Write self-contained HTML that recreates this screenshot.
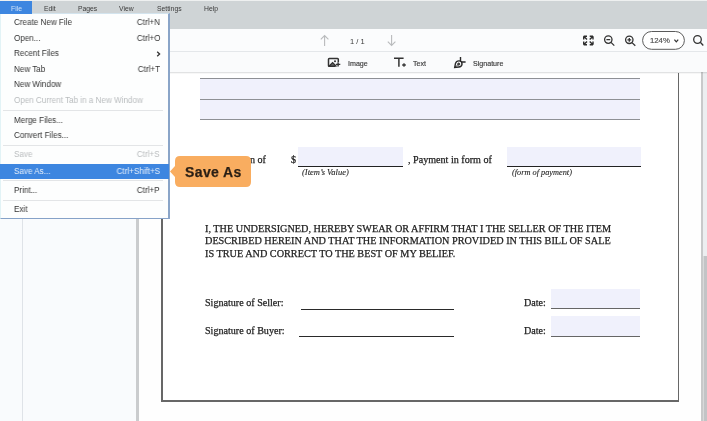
<!DOCTYPE html>
<html><head><meta charset="utf-8">
<style>
*{margin:0;padding:0;box-sizing:border-box}
html,body{width:707px;height:421px;overflow:hidden;background:#fff;position:relative;font-family:"Liberation Sans",sans-serif}
.a{will-change:transform}
.a{position:absolute;white-space:nowrap}
.mb{font-size:6.8px;color:#3a3a3a;line-height:10px}
.mi{font-size:8.4px;color:#333;line-height:10px;left:14px;transform:scaleX(0.965);transform-origin:0 0}
.sc{font-size:8.4px;color:#333;line-height:10px;right:547px;text-align:right;transform:scaleX(0.965);transform-origin:100% 0}
.dis{color:#b9bcbe}
.sep{position:absolute;left:3px;width:160px;height:1px;background:#e3e5e7}
.serif{font-family:"Liberation Serif",serif;color:#1e1e1e;-webkit-text-stroke:0.25px #1e1e1e}
.tb{font-size:7.1px;color:#3a3a3a;line-height:10px;-webkit-text-stroke:0.15px #3a3a3a}
.fld{position:absolute;background:#f0f1fc;border-bottom:1.5px solid #333}
</style></head><body><div id="w" style="position:absolute;left:0;top:0;width:707px;height:421px;overflow:hidden;filter:blur(0.35px)">
<!-- header -->
<div class="a" style="left:0;top:0;width:707px;height:1px;background:#eef0f0"></div>
<div class="a" style="left:0;top:1px;width:707px;height:28px;background:#cfd4d6"></div>
<div class="a" style="left:0;top:1px;width:32px;height:13px;background:#3d86e0;z-index:3"></div>
<div class="a mb" style="left:10.5px;top:3.8px;color:#cfe2f8;z-index:3">File</div>
<div class="a mb" style="left:43.5px;top:3.8px">Edit</div>
<div class="a mb" style="left:77.5px;top:3.8px">Pages</div>
<div class="a mb" style="left:118.5px;top:3.8px">View</div>
<div class="a mb" style="left:157px;top:3.8px">Settings</div>
<div class="a mb" style="left:204px;top:3.8px">Help</div>

<!-- toolbar row 1 -->
<div class="a" style="left:0;top:29px;width:707px;height:23px;background:#fbfcfd;border-bottom:1px solid #e4e7ea"></div>
<!-- toolbar row 2 -->
<div class="a" style="left:0;top:52px;width:707px;height:20.5px;background:#fafbfc;box-shadow:0 1px 1.5px rgba(0,0,0,0.12) "></div>

<!-- toolbar icons (absolute coords) -->
<svg class="a" style="left:0;top:0 " width="707" height="73" viewBox="0 0 707 73">
 <g fill="none" stroke="#b9bbbd" stroke-width="1.1">
  <path d="M324.6 35.5V46M320.8 39.3L324.6 35.5L328.4 39.3"/>
  <path d="M391.6 35V45.5M387.8 41.7L391.6 45.5L395.4 41.7"/>
 </g>
 <g stroke="#2e2e2e" fill="none" stroke-width="1.4">
  <path d="M583.7 36.3H587M583.7 36.3V39.6M583.7 36.3L587 39.6"/>
  <path d="M593 36.3H589.7M593 36.3V39.6M593 36.3L589.7 39.6"/>
  <path d="M583.7 44.7H587M583.7 44.7V41.4M583.7 44.7L587 41.4"/>
  <path d="M593 44.7H589.7M593 44.7V41.4M593 44.7L589.7 41.4"/>
 </g>
 <g stroke="#333" fill="none" stroke-width="1.3">
  <circle cx="608.3" cy="39.6" r="3.7"/><path d="M611 42.4L614.3 45.6M606.4 39.6H610.2"/>
  <circle cx="629.3" cy="39.8" r="3.7"/><path d="M632 42.6L635.3 45.8M627.4 39.8H631.2M629.3 37.9V41.7"/>
  <circle cx="697.5" cy="39.5" r="3.8"/><path d="M700.3 42.3L703.3 45.5"/>
 </g>
 <rect x="642.6" y="31.5" width="41.8" height="17.8" rx="8.9" fill="#fff" stroke="#5a5a5a" stroke-width="1"/>
 <path d="M674.4 39.6L676.3 41.8L678.2 39.6" fill="none" stroke="#333" stroke-width="1.25"/>
 <g stroke="#333" fill="none">
  <path d="M338.3 62V59.2Q338.3 58.4 337.5 58.4H329.3Q328.5 58.4 328.5 59.2V65.4Q328.5 66.2 329.3 66.2H335.5" stroke-width="1.5"/>
  <path d="M329.2 66L332.6 62.6L336 66Z" stroke-width="1.2" fill="#666"/>
  <path d="M335.9 64.4H340.3M338.1 62.2V66.6" stroke-width="1.4"/>
 </g>
 <circle cx="335" cy="61.3" r="1" fill="#333"/>
 <g stroke="#333" fill="none" stroke-width="1.5">
  <path d="M394 58.2H403.6M398.9 58.2V66.8"/>
  <path d="M402.2 65H405.8M404 63.2V66.8" stroke-width="1.3"/>
 </g>
 <g stroke="#2a2a2a" fill="none">
  <path d="M454.7 67.5L455.5 63.4Q456.4 60.6 459.4 60.9Q462.3 61.4 462 64.3Q461.6 66.6 458.8 67Z" stroke-width="1.4"/>
  <circle cx="458.7" cy="64.1" r="1.05" stroke-width="1" fill="#555"/>
  <path d="M454.9 67.3L457.9 64.9" stroke-width="0.8"/>
  <path d="M460.5 57V61.3M461.2 62H465.6" stroke-width="1.4"/>
 </g>
</svg>
<div class="a tb" style="left:350.3px;top:37px;font-size:7.5px;color:#3a3a3a;-webkit-text-stroke:0">1 / 1</div>
<div class="a tb" style="left:650px;top:36px;font-size:7.75px;color:#555">124%</div>
<div class="a tb" style="left:348px;top:58.8px">Image</div>
<div class="a tb" style="left:413px;top:58.8px">Text</div>
<div class="a tb" style="left:473px;top:58.8px">Signature</div>

<!-- doc area -->
<div class="a" style="left:0;top:73px;width:137px;height:348px;background:#f9fbfd"></div>
<div class="a" style="left:22px;top:73px;width:1px;height:348px;background:#dfe3e8"></div>
<div class="a" style="left:136.3px;top:73px;width:2.7px;height:348px;background:#caccce"></div>
<div class="a" style="left:139px;top:73px;width:562px;height:348px;background:#fefefe"></div>
<div class="a" style="left:700.5px;top:72px;width:2px;height:349px;background:#c8c9ca"></div>
<div class="a" style="left:702.5px;top:72px;width:4.5px;height:184px;background:#eceef0"></div>
<div class="a" style="left:702.5px;top:256px;width:1.5px;height:165px;background:#d8d9da"></div>
<div class="a" style="left:704px;top:256px;width:3px;height:165px;background:#c2c4c6"></div>
<!-- page -->
<div class="a" style="left:160.8px;top:73px;width:518.4px;height:329px;background:#fff;border:2px solid #676767;border-right-width:1.8px;border-top:none"></div>

<div class="a" style="left:0;top:72px;width:707px;height:2px;background:linear-gradient(rgba(0,0,0,0.13),rgba(0,0,0,0))"></div>
<!-- top fields -->
<div class="a" style="left:200px;top:79px;width:440px;height:41px;background:#f0f1fc"></div>
<div class="a" style="left:200px;top:78.3px;width:440px;height:1.3px;background:#8e9095"></div>
<div class="a" style="left:200px;top:98.8px;width:440px;height:1.3px;background:#8e9095"></div>
<div class="a" style="left:200px;top:119.1px;width:440px;height:1.3px;background:#8e9095"></div>

<!-- row: n of $ -->
<div class="a serif" style="left:250px;top:154px;font-size:10.1px;line-height:12px">n of</div>
<div class="a serif" style="left:291px;top:154px;font-size:10.1px;line-height:12px">$</div>
<div class="a" style="left:298px;top:147px;width:105px;height:20px;background:#f0f1fc;border-bottom:1.4px solid #222"></div>
<div class="a serif" style="left:302px;top:168px;font-size:8.5px;line-height:9px;font-style:italic;-webkit-text-stroke:0.1px #1e1e1e">(Item’s Value)</div>
<div class="a serif" style="left:408px;top:154px;font-size:10.1px;line-height:12px">, Payment in form of</div>
<div class="a" style="left:507px;top:147px;width:134px;height:20px;background:#f0f1fc;border-bottom:1.4px solid #222"></div>
<div class="a serif" style="left:512px;top:168px;font-size:8.3px;line-height:9px;font-style:italic;-webkit-text-stroke:0.1px #1e1e1e">(form of payment)</div>

<!-- paragraph -->
<div class="a serif" style="left:205px;top:223px;font-size:10.22px;line-height:12.4px">I, THE UNDERSIGNED, HEREBY SWEAR OR AFFIRM THAT I THE SELLER OF THE ITEM<br>DESCRIBED HEREIN AND THAT THE INFORMATION PROVIDED IN THIS BILL OF SALE<br>IS TRUE AND CORRECT TO THE BEST OF MY BELIEF.</div>

<!-- signatures -->
<div class="a serif" style="left:205px;top:297px;font-size:10.1px;line-height:12px">Signature of Seller:</div>
<div class="a" style="left:301px;top:308.8px;width:152.5px;height:1.3px;background:#2a2a2a"></div>
<div class="a serif" style="left:205px;top:325px;font-size:10.1px;line-height:12px">Signature of Buyer:</div>
<div class="a" style="left:299px;top:335.6px;width:154.5px;height:1.3px;background:#2a2a2a"></div>
<div class="a serif" style="left:524px;top:297px;font-size:10.1px;line-height:12px">Date:</div>
<div class="a" style="left:551px;top:289px;width:89px;height:20px;background:#f0f1fc;border-bottom:1.5px solid #666"></div>
<div class="a serif" style="left:524px;top:325px;font-size:10.1px;line-height:12px">Date:</div>
<div class="a" style="left:551px;top:316px;width:89px;height:21px;background:#f0f1fc;border-bottom:1.5px solid #666"></div>

<!-- File menu -->
<div class="a" style="left:0;top:13.3px;width:169.8px;height:205.7px;background:#fdfefe;border-top:1.5px solid #d3e4ee;border-right:2px solid #8aa5c8;border-bottom:1.5px solid #86a2c8;border-left:1px solid #e2f3f6"></div>
<div class="a" style="left:0;top:163.5px;width:169px;height:15px;background:#3d86e0"></div>
<div class="a mi" style="top:17px">Create New File</div><div class="a sc" style="top:17px">Ctrl+N</div>
<div class="a mi" style="top:32.7px">Open...</div><div class="a sc" style="top:32.7px">Ctrl+O</div>
<div class="a mi" style="top:48.3px">Recent Files</div><svg class="a" style="left:156px;top:50.5px" width="5" height="6" viewBox="0 0 5 6"><path d="M1.2 0.8L3.6 3L1.2 5.2" fill="none" stroke="#333" stroke-width="1.3"/></svg>
<div class="a mi" style="top:63.7px">New Tab</div><div class="a sc" style="top:63.7px">Ctrl+T</div>
<div class="a mi" style="top:79px">New Window</div>
<div class="a mi dis" style="top:94.7px">Open Current Tab in a New Window</div>
<div class="sep" style="top:110px"></div>
<div class="a mi" style="top:114.5px">Merge Files...</div>
<div class="a mi" style="top:130.2px">Convert Files...</div>
<div class="sep" style="top:145px"></div>
<div class="a mi dis" style="top:149.4px">Save</div><div class="a sc dis" style="top:149.4px">Ctrl+S</div>
<div class="a mi" style="top:165.5px;color:#e6effa">Save As...</div><div class="a sc" style="top:165.5px;color:#e6effa">Ctrl+Shift+S</div>
<div class="sep" style="top:180px"></div>
<div class="a mi" style="top:185px">Print...</div><div class="a sc" style="top:185px">Ctrl+P</div>
<div class="sep" style="top:200px"></div>
<div class="a mi" style="top:204.4px">Exit</div>

<!-- callout -->
<svg class="a" style="left:169px;top:155px" width="83" height="33" viewBox="0 0 83 33"><path d="M11 1H77Q82 1 82 6V27Q82 32 77 32H11Q6 32 6 27V22L1 16.5L6 11V6Q6 1 11 1Z" fill="#f9ad60"/></svg>
<div class="a" style="left:184.6px;top:165.3px;font-size:14px;line-height:15px;font-weight:bold;color:#2a1f15;letter-spacing:0.4px;-webkit-text-stroke:0.25px #2a1f15">Save As</div>
</div></body></html>
